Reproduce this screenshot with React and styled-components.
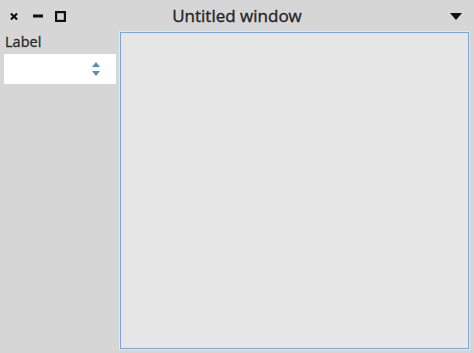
import React from 'react';
import styled, { createGlobalStyle } from 'styled-components';

const GlobalStyle = createGlobalStyle`
  html, body {
    margin: 0;
    padding: 0;
    background: #d6d6d6;
  }
  body {
    font-family: "Open Sans", "Noto Sans", sans-serif;
    color: #2b2b2b;
  }
`;

const Window = styled.div`
  width: 474px;
  height: 353px;
  display: flex;
  flex-direction: column;
  background: #d6d6d6;
  overflow: hidden;
`;

const TitleBar = styled.div`
  height: 32px;
  display: grid;
  grid-template-columns: 80px 1fr 80px;
  align-items: center;
  flex-shrink: 0;
`;

const Controls = styled.div`
  display: flex;
  align-items: center;
  padding-left: 10px;
`;

const CtrlButton = styled.span`
  display: flex;
  align-items: center;
  justify-content: center;
  width: ${p => p.$w}px;
  height: 14px;
  margin-right: ${p => p.$gap}px;
`;

const Title = styled.div`
  text-align: center;
  font-size: 17px;
  color: #242424;
  -webkit-text-stroke: 0.35px #242424;
  padding-bottom: 1px;
`;

const Menu = styled.div`
  display: flex;
  justify-content: flex-end;
  padding-right: 12px;
`;

const Body = styled.div`
  flex: 1;
  display: flex;
  gap: 4px;
  padding: 0 5px 4px 4px;
  min-height: 0;
`;

const Sidebar = styled.div`
  width: 112px;
  display: flex;
  flex-direction: column;
  flex-shrink: 0;
`;

const Label = styled.div`
  font-size: 14.5px;
  line-height: 18px;
  padding: 1px 0 0 1px;
  height: 21px;
  color: #2a2a2a;
  -webkit-text-stroke: 0.3px #2a2a2a;
`;

const SpinBox = styled.div`
  height: 30px;
  background: #ffffff;
  display: flex;
  align-items: center;
  justify-content: flex-end;
  padding-right: 16px;
`;

const Canvas = styled.div`
  flex: 1;
  background: #e6e6e6;
  border: 1px solid #7ba6d9;
  box-shadow: 0 0 0 1px #e3e8ee;
`;

export default function App() {
  return (
    <>
      <GlobalStyle />
      <Window>
        <TitleBar>
          <Controls>
            <CtrlButton $w={8} $gap={15}>
              <svg width="9" height="9" viewBox="0 0 9 9">
                <path d="M1 1 L8 8 M8 1 L1 8" stroke="#111" strokeWidth="2.4" />
              </svg>
            </CtrlButton>
            <CtrlButton $w={10} $gap={12}>
              <svg width="10" height="4" viewBox="0 0 10 4">
                <rect x="0" y="0.5" width="10" height="3" fill="#111" />
              </svg>
            </CtrlButton>
            <CtrlButton $w={11} $gap={0}>
              <svg width="11" height="11" viewBox="0 0 11 11">
                <rect x="1.1" y="1.1" width="8.8" height="8.8" fill="none" stroke="#111" strokeWidth="2.2" />
              </svg>
            </CtrlButton>
          </Controls>
          <Title>Untitled window</Title>
          <Menu>
            <svg width="12" height="7" viewBox="0 0 12 7">
              <path d="M0 0 L12 0 L6 7 Z" fill="#111" />
            </svg>
          </Menu>
        </TitleBar>
        <Body>
          <Sidebar>
            <Label>Label</Label>
            <SpinBox>
              <svg width="8" height="14" viewBox="0 0 8 14">
                <path d="M4 0 L8 5 L0 5 Z" fill="#5d8fb0" />
                <path d="M0 9 L8 9 L4 14 Z" fill="#5d8fb0" />
              </svg>
            </SpinBox>
          </Sidebar>
          <Canvas />
        </Body>
      </Window>
    </>
  );
}
